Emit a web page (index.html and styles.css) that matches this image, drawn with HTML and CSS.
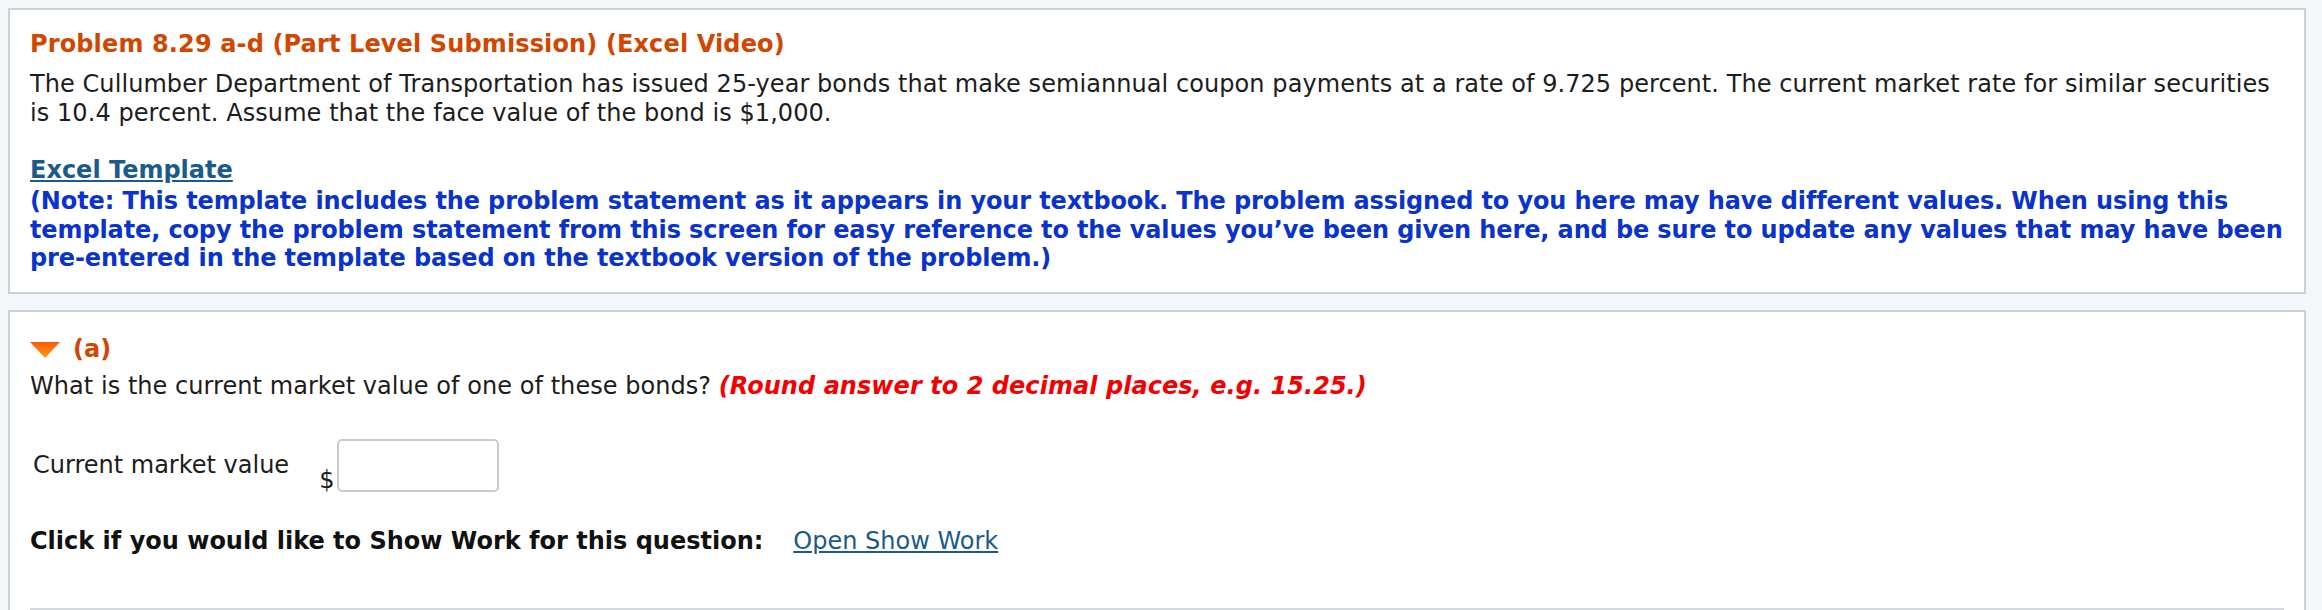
FILE: index.html
```html
<!DOCTYPE html>
<html lang="en">
<head>
<meta charset="utf-8">
<title>Problem 8.29 a-d</title>
<link rel="stylesheet" href="styles.css">
</head>
<body>
<div class="page">
  <section class="card intro">
    <h1 class="title">Problem 8.29 a-d (Part Level Submission) (Excel Video)</h1>
    <p class="stmt">The Cullumber Department of Transportation has issued 25-year bonds that make semiannual coupon payments at a rate of 9.725 percent. The current market rate for similar securities is 10.4 percent. Assume that the face value of the bond is $1,000.</p>
    <a class="template" href="#">Excel Template</a>
    <p class="note">(Note: This template includes the problem statement as it appears in your textbook. The problem assigned to you here may have different values. When using this template, copy the problem statement from this screen for easy reference to the values you’ve been given here, and be sure to update any values that may have been pre-entered in the template based on the textbook version of the problem.)</p>
  </section>
  <section class="card part">
    <div class="part-head">
      <svg class="caret" width="30" height="16" viewBox="0 0 30 16">
        <defs>
          <linearGradient id="cg" x1="0" y1="0" x2="0" y2="1">
            <stop offset="0" stop-color="#ff5a00"/>
            <stop offset="1" stop-color="#ff9a1e"/>
          </linearGradient>
        </defs>
        <polygon points="0,0 30,0 15,16" fill="url(#cg)"/>
      </svg>
      <span class="part-label">(a)</span>
    </div>
    <p class="question">What is the current market value of one of these bonds? <em class="hint">(Round answer to 2 decimal places, e.g. 15.25.)</em></p>
    <div class="answer-row">
      <span class="field-label">Current market value</span>
      <span class="field">
        <span class="dollar">$</span>
        <input class="amount" type="text">
      </span>
    </div>
    <p class="showwork"><strong>Click if you would like to Show Work for this question:</strong><a class="open" href="#">Open Show Work</a></p>
    <div class="sep"></div>
  </section>
</div>
</body>
</html>
```
FILE: styles.css
```css
html, body {
  margin: 0;
  padding: 0;
  background: #f4f7fa;
}
body {
  font-family: "DejaVu Sans", Verdana, sans-serif;
  font-size: 24px;
  line-height: 29px;
  color: #1c1c1c;
}
.page {
  padding: 8px 16px 0 8px;
  display: flex;
  flex-direction: column;
  gap: 16px;
}
.card {
  background: #fff;
  border: 2px solid #c9d1dc;
  padding: 20px 20px 19px 20px;
}
.title {
  margin: 0 0 11px 0;
  font-size: 24px;
  line-height: 29px;
  font-weight: bold;
  color: #d14600;
  letter-spacing: 0.13px;
}
.stmt {
  margin: 0 0 28px 0;
  letter-spacing: 0.07px;
}
.template {
  display: block;
  font-weight: bold;
  color: #1b5a8a;
  text-decoration: underline;
}
.note {
  margin: 2px 0 0 0;
  font-weight: bold;
  color: #0a33cc;
  line-height: 28.7px;
  letter-spacing: -0.12px;
}
.part {
  padding: 23px 20px 0 20px;
}
.part-head {
  display: flex;
  align-items: flex-end;
  gap: 13px;
}
.caret {
  display: block;
  margin-bottom: 6px;
}
.part-label {
  font-weight: bold;
  color: #d14600;
}
.question {
  margin: 8px 0 0 0;
  letter-spacing: 0.05px;
}
.hint {
  font-weight: bold;
  font-style: italic;
  color: #f50000;
}
.answer-row {
  margin-top: 38px;
  display: flex;
  align-items: center;
  gap: 30px;
  padding-left: 3px;
}
.field {
  display: flex;
  align-items: flex-end;
}
.dollar {
  line-height: 24px;
}
.amount {
  box-sizing: border-box;
  width: 162px;
  height: 53px;
  border: 2px solid #cbcbcb;
  border-radius: 5px;
  margin: 0 0 0 3px;
  padding: 0 6px;
  font: inherit;
  background: #fff;
}
.showwork {
  margin: 35px 0 0 0;
  display: flex;
  gap: 30px;
}
.showwork strong {
  color: #111;
}
.open {
  color: #1b5a8a;
  text-decoration: underline;
}
.sep {
  margin-top: 52px;
  height: 2px;
  background: #d4d9e0;
}
```
